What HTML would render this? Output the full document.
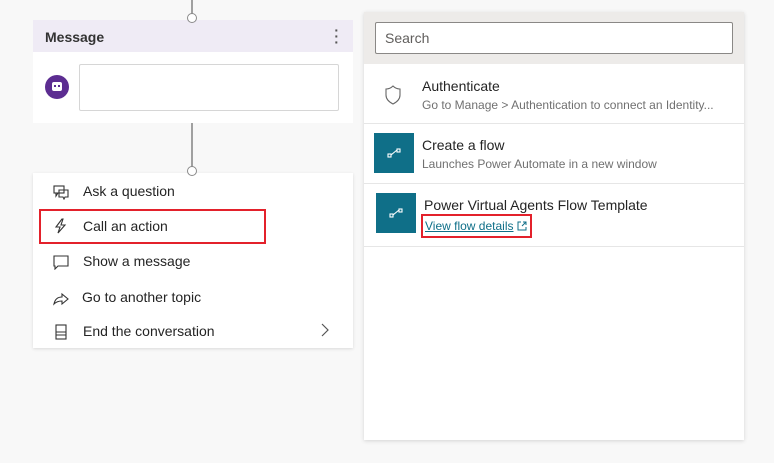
<!DOCTYPE html>
<html><head><style>
*{box-sizing:border-box;margin:0;padding:0}
body{width:774px;height:463px;background:#f8f8f8;font-family:"Liberation Sans",sans-serif;position:relative;overflow:hidden;color:#242424}
.abs{position:absolute}
.t{font-size:14px}
.s{font-size:12px;color:#707070}
.ico{position:absolute;left:20px}
</style></head><body>
<div class="abs" style="left:191px;top:0;width:2px;height:14px;background:#a0a0a0"></div>
<div class="abs" style="left:187px;top:13px;width:10px;height:10px;border:1.5px solid #8a8a8a;border-radius:50%;background:#fff;z-index:2"></div>
<div class="abs" style="left:33px;top:20px;width:320px;height:103px;background:#fff">
  <div style="height:32px;background:#efebf5;padding:9px 12px;font-size:14px;color:#333;position:relative;font-weight:bold">Message<span class="abs" style="right:14px;top:7px;font-weight:bold;font-size:14px;line-height:6px;color:#555">·<br>·<br>·</span></div>
  <div class="abs" style="left:12px;top:55px;width:24px;height:24px;border-radius:50%;background:#5c2d91">
    <div class="abs" style="left:7px;top:7px;width:10px;height:9px;background:#fff;border-radius:2px"></div>
    <div class="abs" style="left:9px;top:10px;width:2px;height:2px;background:#5c2d91"></div>
    <div class="abs" style="left:13px;top:10px;width:2px;height:2px;background:#5c2d91"></div>
  </div>
  <div class="abs" style="left:46px;top:44px;width:260px;height:47px;border:1px solid #d6d6d6;border-radius:2px"></div>
</div>
<div class="abs" style="left:191px;top:123px;width:2px;height:46px;background:#a0a0a0"></div>
<div class="abs" style="left:187px;top:166px;width:10px;height:10px;border:1.5px solid #8a8a8a;border-radius:50%;background:#fff;z-index:2"></div>
<div class="abs" style="left:33px;top:173px;width:320px;height:175px;background:#fff;box-shadow:0 1px 3px rgba(0,0,0,.12)">
  <svg class="ico" style="top:11px" width="16" height="16" viewBox="0 0 16 16" fill="none" stroke="#333" stroke-width="1.1"><rect x="1" y="2" width="10" height="7"/><path d="M3 9v3l2-3M6 6h9v7h-3l-1 2-1-2H6z"/></svg>
  <div class="abs t" style="left:50px;top:10px">Ask a question</div>
  <svg class="ico" style="top:45px" width="16" height="16" viewBox="0 0 16 16" fill="none" stroke="#333" stroke-width="1.1"><path d="M9 1L3 9h4l-2 6 7-8H8l2-6z"/></svg>
  <div class="abs t" style="left:50px;top:45px">Call an action</div>
  <div class="abs" style="left:6px;top:36px;width:227px;height:35px;border:2px solid #e3212b"></div>
  <svg class="ico" style="top:81px" width="16" height="16" viewBox="0 0 16 16" fill="none" stroke="#333" stroke-width="1.1"><path d="M1 2h14v10H5l-3 3v-3H1z"/></svg>
  <div class="abs t" style="left:50px;top:80px">Show a message</div>
  <svg class="ico" style="top:117px" width="16" height="16" viewBox="0 0 16 16" fill="none" stroke="#333" stroke-width="1.1"><path d="M1 14c1-5 4-7 8-7V4l6 5-6 5v-3c-3 0-6 1-8 3z"/></svg>
  <div class="abs t" style="left:49px;top:116px">Go to another topic</div>
  <svg class="ico" style="top:151px" width="16" height="16" viewBox="0 0 16 16" fill="none" stroke="#333" stroke-width="1.1"><rect x="3" y="1" width="10" height="14"/><path d="M3 8h10M3 11h10"/></svg>
  <div class="abs t" style="left:50px;top:150px">End the conversation</div>
  <svg class="abs" style="left:287px;top:149px" width="10" height="16" viewBox="0 0 10 16" fill="none" stroke="#555" stroke-width="1.2"><path d="M2 2l6 6-6 6"/></svg>
</div>
<div class="abs" style="left:364px;top:12px;width:380px;height:428px;background:#fff;box-shadow:0 1px 4px rgba(0,0,0,.15)">
  <div style="height:52px;background:#edebe9;padding:10px 11px">
    <div style="height:32px;border:1px solid #8a8886;border-radius:2px;background:#fff;padding:7px 9px;font-size:14px;color:#605e5c">Search</div>
  </div>
  <svg class="abs" style="left:20px;top:73px" width="18" height="20" viewBox="0 0 18 20" fill="none" stroke="#666" stroke-width="1.1"><path d="M9 1c2 2 5 3 7 3v6c0 4-3 7-7 9-4-2-7-5-7-9V4c2 0 5-1 7-3z"/></svg>
  <div class="abs t" style="left:58px;top:66px">Authenticate</div>
  <div class="abs s" style="left:58px;top:86px">Go to Manage &gt; Authentication to connect an Identity...</div>
  <div class="abs" style="left:0;top:111px;width:380px;height:1px;background:#e6e6e6"></div>
  <div class="abs" style="left:10px;top:121px;width:40px;height:40px;background:#0f6f88"></div>
  <svg class="abs" style="left:22px;top:135px" width="16" height="12" viewBox="0 0 16 12" fill="none" stroke="#fff" stroke-width="1.1"><rect x="2" y="7" width="3" height="3"/><rect x="11" y="2" width="3" height="3"/><path d="M5 8l6-5"/></svg>
  <div class="abs t" style="left:58px;top:125px">Create a flow</div>
  <div class="abs s" style="left:58px;top:145px">Launches Power Automate in a new window</div>
  <div class="abs" style="left:0;top:171px;width:380px;height:1px;background:#e6e6e6"></div>
  <div class="abs" style="left:12px;top:181px;width:40px;height:40px;background:#0f6f88"></div>
  <svg class="abs" style="left:24px;top:195px" width="16" height="12" viewBox="0 0 16 12" fill="none" stroke="#fff" stroke-width="1.1"><rect x="2" y="7" width="3" height="3"/><rect x="11" y="2" width="3" height="3"/><path d="M5 8l6-5"/></svg>
  <div class="abs t" style="left:60px;top:185px">Power Virtual Agents Flow Template</div>
  <div class="abs" style="left:57px;top:202px;width:111px;height:24px;border:2px solid #e3212b"></div>
  <div class="abs" style="left:61px;top:207px;font-size:12px;color:#0f6f88;text-decoration:underline">View flow details</div>
  <svg class="abs" style="left:153px;top:209px" width="10" height="10" viewBox="0 0 10 10" fill="none" stroke="#0f6f88" stroke-width="1"><path d="M4 1H1v8h8V6M6 1h3v3M9 1L5 5"/></svg>
  <div class="abs" style="left:0;top:234px;width:380px;height:1px;background:#e6e6e6"></div>
</div>
</body></html>
